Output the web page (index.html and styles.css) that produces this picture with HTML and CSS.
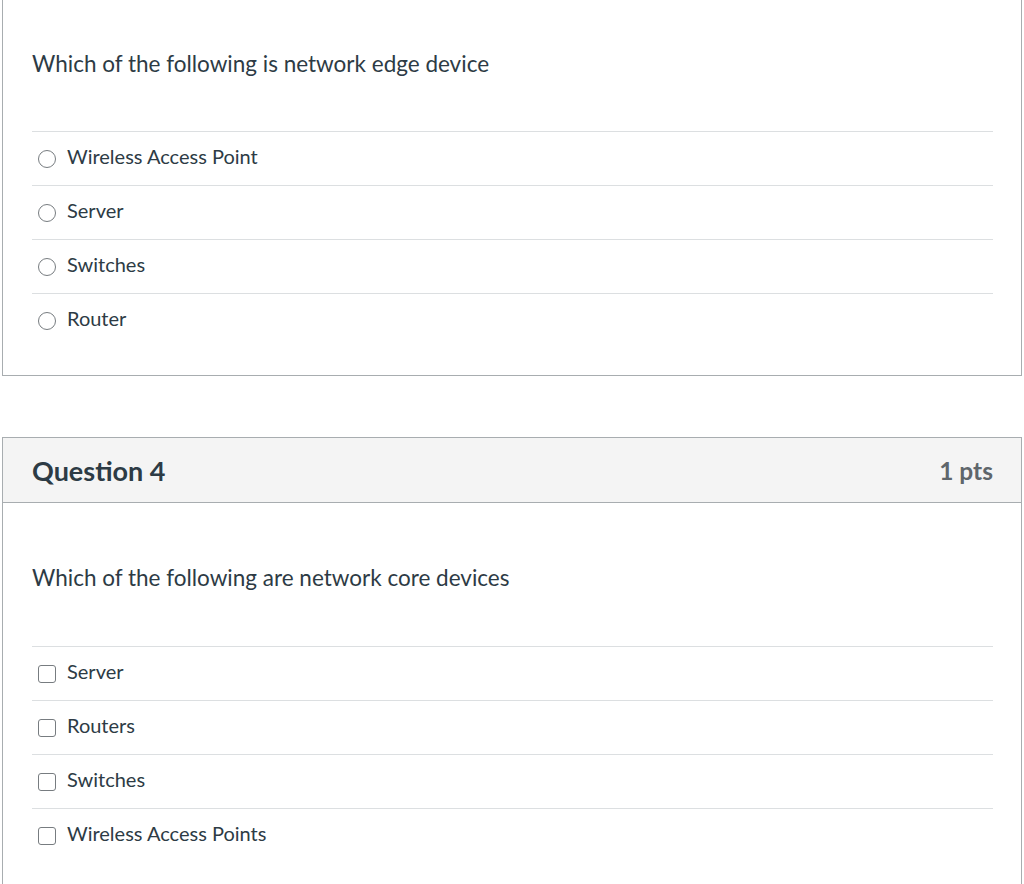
FILE: index.html
```html
<!DOCTYPE html>
<html lang="en">
<head>
    <meta charset="UTF-8">
    <meta name="viewport" content="width=device-width, initial-scale=1.0">
    <title>Quiz</title>
    <link rel="stylesheet" href="styles.css">
</head>
<body>
    <div class="quiz">
        <div class="question question--first">
            <div class="question__body">
                <p class="question__text">Which of the following is network edge device</p>
                <div class="answers">
                    <label class="answer"><span class="radio"></span><span class="answer__label">Wireless Access Point</span></label>
                    <label class="answer"><span class="radio"></span><span class="answer__label">Server</span></label>
                    <label class="answer"><span class="radio"></span><span class="answer__label">Switches</span></label>
                    <label class="answer"><span class="radio"></span><span class="answer__label">Router</span></label>
                </div>
            </div>
        </div>

        <div class="question">
            <div class="question__header">
                <h2>Question 4</h2>
                <span class="question__pts">1 pts</span>
            </div>
            <div class="question__body">
                <p class="question__text">Which of the following are network core devices</p>
                <div class="answers">
                    <label class="answer"><span class="check"></span><span class="answer__label">Server</span></label>
                    <label class="answer"><span class="check"></span><span class="answer__label">Routers</span></label>
                    <label class="answer"><span class="check"></span><span class="answer__label">Switches</span></label>
                    <label class="answer"><span class="check"></span><span class="answer__label">Wireless Access Points</span></label>
                </div>
            </div>
        </div>
    </div>
</body>
</html>
```

FILE: styles.css
```css
* {
    box-sizing: border-box;
}
body {
    margin: 0;
    padding: 0;
    background: #ffffff;
    font-family: Lato, "Open Sans", sans-serif;
    color: #2d3b45;
}
.quiz {
    padding: 0 2px;
}
.question {
    border: 1px solid #a8adb0;
    background: #ffffff;
    margin-bottom: 61px;
}
.question--first {
    margin-top: -14px;
}
.question__header {
    display: flex;
    align-items: center;
    justify-content: space-between;
    height: 65px;
    padding: 0 28px 0 29px;
    background: #f4f4f4;
    border-bottom: 1px solid #a8adb0;
}
.question__header h2 {
    margin: 0;
    font-size: 27px;
    font-weight: 700;
    color: #2d3b45;
}
.question__pts {
    font-size: 24.5px;
    font-weight: 700;
    color: #5f666b;
}
.question__body {
    padding: 60px 28px 28px 29px;
}
.question--first .question__text {
    padding-top: 2px;
}
.question--first .answers {
    margin-top: 52px;
}
.question__text {
    margin: 0;
    font-size: 22.5px;
    line-height: 30px;
}
.answers {
    margin-top: 53px;
}
.answer {
    display: flex;
    align-items: center;
    height: 54px;
    border-top: 1px solid #dcdfe1;
    font-size: 20px;
    padding-left: 6px;
}
.answer__label {
    margin-bottom: 5px;
}
.radio,
.check {
    flex: none;
    width: 18px;
    height: 18px;
    margin-right: 11px;
    border: 1.5px solid #777c80;
    background: #ffffff;
}
.radio {
    border-radius: 50%;
}
.check {
    border-radius: 3px;
}
```
